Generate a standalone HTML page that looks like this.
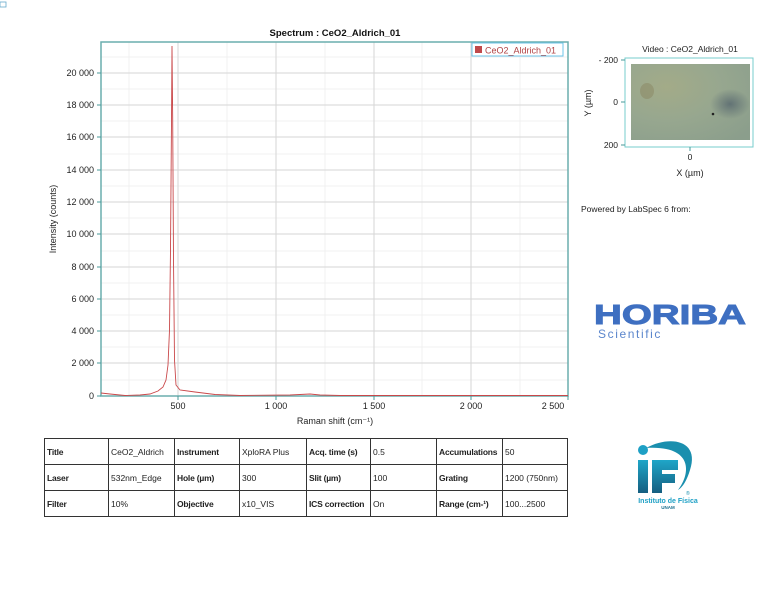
<!DOCTYPE html>
<html><head><meta charset="utf-8"><style>
body{margin:0;width:768px;height:594px;background:#fff;overflow:hidden;font-family:"Liberation Sans",sans-serif;position:relative}
svg{position:absolute;left:0;top:0}
table{position:absolute;left:44px;top:438px;border-collapse:collapse;font-size:8.5px;color:#222;table-layout:fixed;width:523px}
td{border:1.2px solid #333;height:25px;padding:0 2px;white-space:nowrap;overflow:hidden}
td.b{font-weight:bold;letter-spacing:-0.2px}
</style></head><body>
<svg width="768" height="594" font-family="Liberation Sans, sans-serif">
<rect x="0" y="2" width="6" height="5" fill="none" stroke="#6ac" stroke-width="0.8"/>
<text x="335" y="36" font-size="9.5" font-weight="bold" text-anchor="middle" fill="#111">Spectrum : CeO2_Aldrich_01</text>
<g stroke="#f0f0f0" stroke-width="1">
<line x1="129" y1="42" x2="129" y2="396"/><line x1="227" y1="42" x2="227" y2="396"/><line x1="325" y1="42" x2="325" y2="396"/><line x1="422" y1="42" x2="422" y2="396"/><line x1="520" y1="42" x2="520" y2="396"/>
<line x1="101" y1="57" x2="568" y2="57"/><line x1="101" y1="89" x2="568" y2="89"/><line x1="101" y1="121" x2="568" y2="121"/><line x1="101" y1="154" x2="568" y2="154"/><line x1="101" y1="186" x2="568" y2="186"/><line x1="101" y1="218" x2="568" y2="218"/><line x1="101" y1="251" x2="568" y2="251"/><line x1="101" y1="283" x2="568" y2="283"/><line x1="101" y1="315" x2="568" y2="315"/><line x1="101" y1="347" x2="568" y2="347"/><line x1="101" y1="380" x2="568" y2="380"/>
</g>
<g stroke="#d6d6d6" stroke-width="1">
<line x1="178" y1="42" x2="178" y2="396"/><line x1="276" y1="42" x2="276" y2="396"/><line x1="374" y1="42" x2="374" y2="396"/><line x1="471" y1="42" x2="471" y2="396"/>
<line x1="101" y1="73" x2="568" y2="73"/><line x1="101" y1="105" x2="568" y2="105"/><line x1="101" y1="137" x2="568" y2="137"/><line x1="101" y1="170" x2="568" y2="170"/><line x1="101" y1="202" x2="568" y2="202"/><line x1="101" y1="234" x2="568" y2="234"/><line x1="101" y1="267" x2="568" y2="267"/><line x1="101" y1="299" x2="568" y2="299"/><line x1="101" y1="331" x2="568" y2="331"/><line x1="101" y1="363" x2="568" y2="363"/>
</g>
<rect x="101" y="42" width="467" height="354" fill="none" stroke="#6aaeae" stroke-width="1.5"/>
<g stroke="#4a9a9a" stroke-width="1">
<line x1="97" y1="73" x2="101" y2="73"/><line x1="97" y1="105" x2="101" y2="105"/><line x1="97" y1="137" x2="101" y2="137"/><line x1="97" y1="170" x2="101" y2="170"/><line x1="97" y1="202" x2="101" y2="202"/><line x1="97" y1="234" x2="101" y2="234"/><line x1="97" y1="267" x2="101" y2="267"/><line x1="97" y1="299" x2="101" y2="299"/><line x1="97" y1="331" x2="101" y2="331"/><line x1="97" y1="363" x2="101" y2="363"/><line x1="97" y1="396" x2="101" y2="396"/>
<line x1="178" y1="396" x2="178" y2="400"/><line x1="276" y1="396" x2="276" y2="400"/><line x1="374" y1="396" x2="374" y2="400"/><line x1="471" y1="396" x2="471" y2="400"/><line x1="568" y1="396" x2="568" y2="400"/>
</g>
<g font-size="9" fill="#222" text-anchor="end">
<text x="94" y="76">20 000</text><text x="94" y="108">18 000</text><text x="94" y="140">16 000</text><text x="94" y="173">14 000</text><text x="94" y="205">12 000</text><text x="94" y="237">10 000</text><text x="94" y="270">8 000</text><text x="94" y="302">6 000</text><text x="94" y="334">4 000</text><text x="94" y="366">2 000</text><text x="94" y="399">0</text>
</g>
<g font-size="9" fill="#222" text-anchor="middle">
<text x="178" y="409">500</text><text x="276" y="409">1 000</text><text x="374" y="409">1 500</text><text x="471" y="409">2 000</text><text x="553" y="409">2 500</text>
<text x="335" y="424">Raman shift (cm⁻¹)</text>
</g>
<text transform="translate(56,219) rotate(-90)" font-size="9" fill="#222" text-anchor="middle">Intensity (counts)</text>
<path d="M101,393 L110,394 L125,395.5 L140,395 L150,394 L158,391 L163,387 L166,380 L168,365 L169.5,330 L170.5,250 L171.5,120 L172,46 L172.7,120 L173.5,260 L174.5,360 L176,385 L180,390 L195,392 L215,394.5 L240,395.5 L290,395 L310,394 L320,395 L340,395.5 L568,395.5" fill="none" stroke="#c9484a" stroke-width="0.9"/>
<rect x="472" y="43" width="91" height="13" fill="#fff" stroke="#6cc4e8" stroke-width="1"/>
<rect x="475" y="46" width="7" height="7" fill="#c0494b"/>
<text x="485" y="53.5" font-size="9" fill="#b04446">CeO2_Aldrich_01</text>
<text x="690" y="52" font-size="8.5" fill="#222" text-anchor="middle">Video : CeO2_Aldrich_01</text>
<rect x="625" y="58" width="128" height="89" fill="#fff" stroke="#7cc" stroke-width="1"/>
<defs><radialGradient id="g1" cx="0.3" cy="0.3" r="0.9"><stop offset="0" stop-color="#a3ab88"/><stop offset="0.5" stop-color="#97a78f"/><stop offset="1" stop-color="#8b9e8c"/></radialGradient>
<radialGradient id="g2" cx="0.5" cy="0.5" r="0.5"><stop offset="0" stop-color="#3a4a60" stop-opacity="0.55"/><stop offset="1" stop-color="#3a4a60" stop-opacity="0"/></radialGradient></defs>
<rect x="631" y="64" width="119" height="76" fill="url(#g1)"/>
<ellipse cx="730" cy="104" rx="20" ry="15" fill="url(#g2)"/>
<ellipse cx="647" cy="91" rx="7" ry="8" fill="#857d58" opacity="0.4"/>
<circle cx="713" cy="114" r="1.3" fill="#222"/>
<g font-size="8.5" fill="#222" text-anchor="end"><text x="618" y="63">- 200</text><text x="618" y="105">0</text><text x="618" y="148">200</text></g>
<g stroke="#4a9a9a"><line x1="621" y1="60" x2="625" y2="60"/><line x1="621" y1="102" x2="625" y2="102"/><line x1="621" y1="145" x2="625" y2="145"/><line x1="690" y1="147" x2="690" y2="151"/></g>
<text x="690" y="160" font-size="8.5" fill="#222" text-anchor="middle">0</text>
<text x="690" y="176" font-size="9" fill="#222" text-anchor="middle">X (µm)</text>
<text transform="translate(591,103) rotate(-90)" font-size="9" fill="#222" text-anchor="middle">Y (µm)</text>
<text x="581" y="212" font-size="8.5" fill="#222">Powered by LabSpec 6 from:</text>
<text x="594" y="324" font-size="28" font-weight="bold" fill="#3e6fc1" stroke="#3e6fc1" stroke-width="1" textLength="152" lengthAdjust="spacingAndGlyphs">HORIBA</text>
<text x="598" y="338" font-size="12" fill="#5b86cc" letter-spacing="1.6">Scientific</text>
<defs><linearGradient id="g3" x1="0" y1="0" x2="0" y2="1"><stop offset="0" stop-color="#1fa6c8"/><stop offset="1" stop-color="#155e80"/></linearGradient></defs>
<circle cx="643" cy="450" r="5" fill="#1ea0c5"/>
<rect x="638" y="460" width="10" height="33" fill="url(#g3)"/>
<path d="M652,460 H678 V470 H662 V474 H675 V483 H662 V493 H652 Z" fill="url(#g3)"/>
<path d="M646,448 C670,435 700,440 690,470 C687,480 683,487 678,490 C690,475 695,445 646,448 Z" fill="#1a8fae"/>
<text x="686" y="495" font-size="5" fill="#1a8fae">®</text>
<text x="668" y="503" font-size="7" font-weight="bold" fill="#1ea0c5" text-anchor="middle">Instituto de Física</text>
<text x="668" y="509" font-size="4.5" font-weight="bold" fill="#1a6f8f" text-anchor="middle">UNAM</text>
</svg>
<table>
<colgroup><col style="width:64px"><col style="width:66px"><col style="width:65px"><col style="width:67px"><col style="width:64px"><col style="width:66px"><col style="width:66px"><col style="width:65px"></colgroup>
<tr><td class="b">Title</td><td>CeO2_Aldrich</td><td class="b">Instrument</td><td>XploRA Plus</td><td class="b">Acq. time (s)</td><td>0.5</td><td class="b">Accumulations</td><td>50</td></tr>
<tr><td class="b">Laser</td><td>532nm_Edge</td><td class="b">Hole (µm)</td><td>300</td><td class="b">Slit (µm)</td><td>100</td><td class="b">Grating</td><td>1200 (750nm)</td></tr>
<tr><td class="b">Filter</td><td>10%</td><td class="b">Objective</td><td>x10_VIS</td><td class="b">ICS correction</td><td>On</td><td class="b">Range (cm-¹)</td><td>100...2500</td></tr>
</table>
</body></html>
